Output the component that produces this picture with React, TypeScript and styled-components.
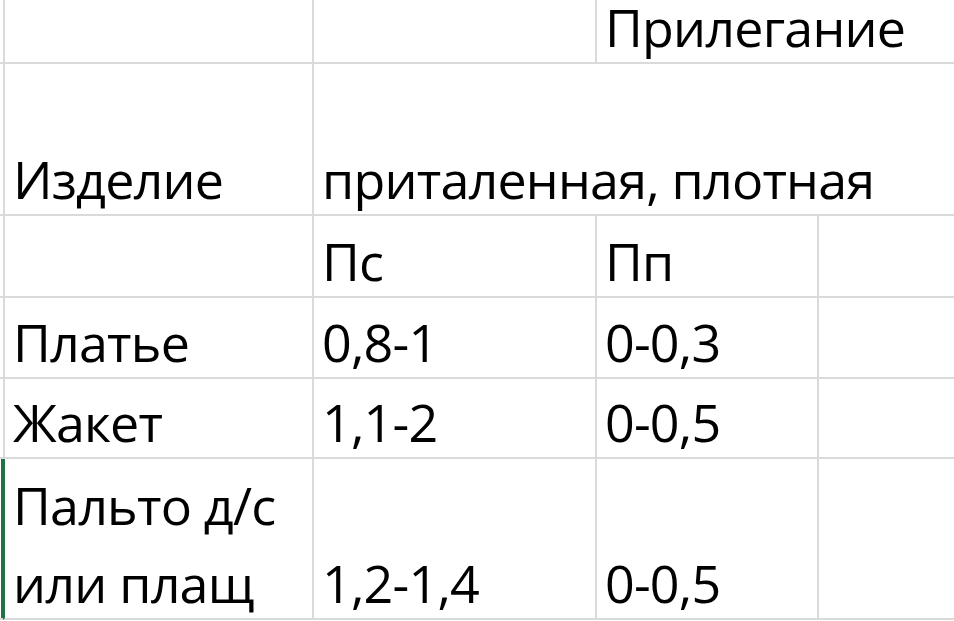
import styled, { createGlobalStyle } from "styled-components";

const GlobalStyle = createGlobalStyle`
  html, body {
    margin: 0;
    padding: 0;
    background: #ffffff;
  }
  body {
    width: 954px;
    height: 621px;
    overflow: hidden;
  }
`;

const gridColor = "#dadada";
const selectColor = "#217346";

const Sheet = styled.div`
  display: grid;
  grid-template-columns: 3px 311px 283px 222px 135px;
  grid-template-rows: 64px 152px 82px 81px 80px 161px;
  width: 954px;
  font-family: "Open Sans", "Noto Sans", sans-serif;
  font-size: 52px;
  letter-spacing: -0.8px;
  color: #000000;
  background: #ffffff;
`;

const Gutter = styled.div<{ $active?: boolean }>`
  box-sizing: border-box;
  border-bottom: 2px solid ${gridColor};
  background: ${(props) =>
    props.$active
      ? `linear-gradient(to right, transparent 1px, ${selectColor} 1px)`
      : "transparent"};
`;

const Cell = styled.div<{
  $span?: number;
  $first?: boolean;
  $last?: boolean;
  $active?: boolean;
}>`
  box-sizing: border-box;
  grid-column: span ${(props) => props.$span ?? 1};
  display: flex;
  align-items: flex-end;
  padding-left: 8px;
  border-right: ${(props) => (props.$last ? "none" : `2px solid ${gridColor}`)};
  border-bottom: 2px solid ${gridColor};
  border-left: ${(props) =>
    props.$first ? `2px solid ${props.$active ? selectColor : gridColor}` : "none"};
  white-space: nowrap;
  min-width: 0;
`;

// line box tuned so the baseline sits 15px above the grid line
const Text = styled.span<{ $compact?: boolean }>`
  display: block;
  line-height: ${(props) => (props.$compact ? "54px" : "78px")};
  margin-bottom: ${(props) => (props.$compact ? "8px" : "-4px")};
  white-space: pre;
`;

type Row = {
  cells: { text?: string; span?: number }[];
  active?: boolean;
  compact?: boolean;
};

const rows: Row[] = [
  { cells: [{}, {}, { text: "Прилегание", span: 2 }], compact: true },
  { cells: [{ text: "Изделие" }, { text: "приталенная, плотная", span: 3 }] },
  { cells: [{}, { text: "Пс" }, { text: "Пп" }, {}] },
  { cells: [{ text: "Платье" }, { text: "0,8-1" }, { text: "0-0,3" }, {}] },
  { cells: [{ text: "Жакет" }, { text: "1,1-2" }, { text: "0-0,5" }, {}] },
  {
    cells: [{ text: "Пальто д/с\nили плащ" }, { text: "1,2-1,4" }, { text: "0-0,5" }, {}],
    active: true,
  },
];

function App() {
  return (
    <>
      <GlobalStyle />
      <Sheet>
        {rows.map((row, r) => [
          <Gutter key={`g${r}`} $active={row.active} />,
          ...row.cells.map((cell, c) => (
            <Cell
              key={`${r}-${c}`}
              $span={cell.span}
              $first={c === 0}
              $last={c === row.cells.length - 1}
              $active={row.active}
            >
              {cell.text && <Text $compact={row.compact}>{cell.text}</Text>}
            </Cell>
          )),
        ])}
      </Sheet>
    </>
  );
}

export default App;
